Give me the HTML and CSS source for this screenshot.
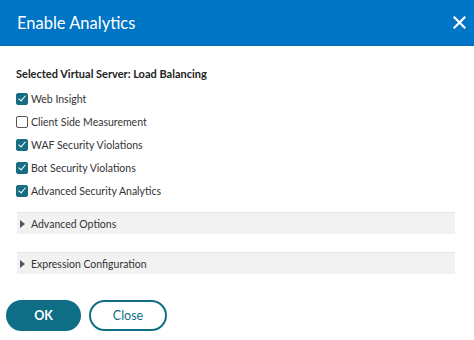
FILE: index.html
```html
<!DOCTYPE html>
<html lang="en">
<head>
  <meta charset="UTF-8" />
  <title>Enable Analytics</title>
  <link rel="stylesheet" href="styles.css">
</head>
<body>
  <div class="dialog">
    <div class="dialog-header">
      <h2>Enable Analytics</h2>
      <button class="close-x" aria-label="Close">
        <svg width="13" height="13" viewBox="0 0 13 13">
          <path d="M1.5 1.5 L11.5 11.5 M11.5 1.5 L1.5 11.5" stroke="#fff" stroke-width="2.2" stroke-linecap="square" />
        </svg>
      </button>
    </div>

    <div class="dialog-body">
      <div class="server-label">Selected Virtual Server: Load Balancing</div>

      <label class="check-row"><span class="box checked"></span>Web Insight</label>
      <label class="check-row"><span class="box"></span>Client Side Measurement</label>
      <label class="check-row"><span class="box checked"></span>WAF Security Violations</label>
      <label class="check-row"><span class="box checked"></span>Bot Security Violations</label>
      <label class="check-row"><span class="box checked"></span>Advanced Security Analytics</label>

      <div class="section first">
        <span class="caret"></span>Advanced Options
      </div>
      <div class="section">
        <span class="caret"></span>Expression Configuration
      </div>
    </div>

    <div class="dialog-footer">
      <button class="btn btn-primary">OK</button>
      <button class="btn btn-outline">Close</button>
    </div>
  </div>
</body>
</html>
```
FILE: styles.css
```css
body {
  margin: 0;
  font-family: Lato, "Liberation Sans", sans-serif;
  background-color: #fff;
  color: #222;
}
.dialog {
  width: 474px;
  height: 340px;
  overflow: hidden;
}
.dialog-header {
  height: 45px;
  background-color: #0075c6;
  border-bottom: 1px solid #0a68ad;
  display: flex;
  align-items: center;
  justify-content: space-between;
  padding: 0 8px 0 17px;
}
.dialog-header h2 {
  margin: 0;
  font-size: 16.5px;
  font-weight: 400;
  color: #fff;
}
.close-x {
  background: none;
  border: none;
  padding: 0;
  width: 13px;
  height: 13px;
  display: flex;
}
.dialog-body {
  padding: 20px 19px 0 16px;
}
.server-label {
  height: 16px;
  line-height: 16px;
  font-size: 11px;
  font-weight: 700;
  color: #222;
  margin-bottom: 5px;
}
.check-row {
  display: flex;
  align-items: center;
  height: 23px;
  font-size: 10.5px;
  color: #333;
}
.box {
  width: 10px;
  height: 10px;
  border: 1px solid #555;
  border-radius: 2px;
  margin-right: 3px;
  box-sizing: content-box;
  position: relative;
}
.box.checked {
  background-color: #176e82;
  border-color: #176e82;
}
.box.checked::after {
  content: "";
  position: absolute;
  left: 3px;
  top: 0px;
  width: 3px;
  height: 6px;
  border: solid #fff;
  border-width: 0 1.5px 1.5px 0;
  transform: rotate(40deg);
}
.section {
  display: flex;
  align-items: center;
  height: 21px;
  margin: 18px 0 0 1px;
  padding-left: 3px;
  background-color: #f2f2f2;
  border-top: 1px solid #e6e6e6;
  font-size: 10.5px;
  color: #333;
}
.section.first {
  margin-top: 10px;
}
.caret {
  width: 0;
  height: 0;
  border-left: 5px solid #555;
  border-top: 4px solid transparent;
  border-bottom: 4px solid transparent;
  margin-right: 6px;
}
.dialog-footer {
  display: flex;
  gap: 8px;
  padding: 26px 0 0 6px;
}
.btn {
  height: 31px;
  border-radius: 16px;
  font-family: inherit;
  font-size: 12.5px;
  font-weight: 700;
  cursor: pointer;
}
.btn-primary {
  width: 75px;
  background-color: #0f6e85;
  color: #fff;
  border: none;
}
.btn-outline {
  width: 78px;
  background-color: #fff;
  color: #0f6e85;
  border: 2px solid #0f6e85;
  font-weight: 400;
}
```
